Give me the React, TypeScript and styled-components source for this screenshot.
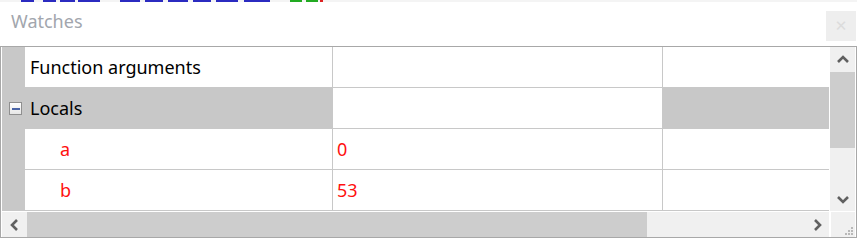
import styled, { createGlobalStyle } from "styled-components";

const GlobalStyle = createGlobalStyle`
  html, body {
    margin: 0;
    padding: 0;
    background: #ffffff;
  }
  body {
    font-family: "Noto Sans", "Open Sans", sans-serif;
  }
`;

const Page = styled.div`
  width: 857px;
  height: 239px;
  background: #ffffff;
  overflow: hidden;
`;

const CodeStrip = styled.div`
  position: relative;
  height: 2px;
  background: #f4f4f4;
`;

const CodeBit = styled.span<{ $color: string }>`
  position: absolute;
  top: 0;
  height: 2px;
  background: ${(p) => p.$color};
`;

const Header = styled.div`
  display: flex;
  align-items: flex-start;
  justify-content: space-between;
  height: 44px;
`;

const Title = styled.div`
  margin: 7px 0 0 11px;
  font-size: 18px;
  color: #a2a6ad;
`;

const CloseButton = styled.div`
  display: flex;
  align-items: center;
  justify-content: center;
  width: 30px;
  height: 30px;
  margin-top: 9px;
  margin-right: 1px;
  background: #eeeeee;
  color: #dcdcdc;
  font-family: "DejaVu Sans", sans-serif;
  font-weight: bold;
  font-size: 15px;
`;

const Panel = styled.div`
  display: grid;
  grid-template-columns: 1fr 26px;
  grid-template-rows: 164px 26px;
  padding: 0 1px 0 1px;
  border: 1px solid #a8a8a8;
  box-sizing: content-box;
  width: 853px;
`;

const Grid = styled.div`
  display: grid;
  grid-template-columns: 23px 308px 330px 1fr;
  grid-auto-rows: 41px;
`;

const Gutter = styled.div`
  display: flex;
  align-items: center;
  justify-content: center;
  background: #c8c8c8;
`;

const Cell = styled.div<{ $shaded?: boolean; $indent?: number; $red?: boolean; $last?: boolean }>`
  display: flex;
  align-items: center;
  padding-left: ${(p) => p.$indent ?? 5}px;
  background: ${(p) => (p.$shaded ? "#c8c8c8" : "#ffffff")};
  border-bottom: 1px solid #c8c8c8;
  border-right: ${(p) => (p.$last ? "none" : "1px solid #c8c8c8")};
  color: ${(p) => (p.$red ? "#ff1010" : "#000000")};
  font-size: 18px;
  white-space: nowrap;
`;

const ExpandBox = styled.div`
  display: flex;
  align-items: center;
  justify-content: center;
  width: 11px;
  height: 11px;
  margin-left: 4px;
  border: 1px solid #8f8f8f;
  background: linear-gradient(#ffffff, #e6e6e6);
`;

const Dash = styled.div`
  width: 8px;
  height: 2px;
  background: #4a64a6;
`;

const VScroll = styled.div`
  display: flex;
  flex-direction: column;
  background: #f0f0f0;
  margin-left: 1px;
`;

const ArrowBox = styled.div`
  display: flex;
  align-items: center;
  justify-content: center;
  width: 25px;
  height: 25px;
  flex-shrink: 0;
`;

const VThumb = styled.div`
  height: 76px;
  background: #cdcdcd;
`;

const Track = styled.div`
  flex: 1;
`;

const HScroll = styled.div`
  display: flex;
  background: #f0f0f0;
  margin-top: 1px;
`;

const HThumb = styled.div`
  width: 620px;
  background: #cdcdcd;
`;

const Corner = styled.div`
  position: relative;
  margin: 1px 0 0 2px;
  background: #f0f0f0;
`;

const GripDot = styled.span`
  position: absolute;
  width: 2px;
  height: 2px;
  background: #b8b8b8;
`;

function Chevron({ dir }: { dir: "up" | "down" | "left" | "right" }) {
  const pts = {
    up: "1,8 6,3 11,8",
    down: "1,4 6,9 11,4",
    left: "8,1 3,6 8,11",
    right: "4,1 9,6 4,11",
  }[dir];
  return (
    <svg width="12" height="12" viewBox="0 0 12 12">
      <polyline points={pts} fill="none" stroke="#606060" strokeWidth="2.6" />
    </svg>
  );
}

const codeBits = [
  { left: 21, width: 13, color: "#2b2bc0" },
  { left: 43, width: 13, color: "#2b2bc0" },
  { left: 60, width: 15, color: "#2b2bc0" },
  { left: 78, width: 22, color: "#2b2bc0" },
  { left: 120, width: 20, color: "#2b2bc0" },
  { left: 145, width: 18, color: "#2b2bc0" },
  { left: 168, width: 20, color: "#2b2bc0" },
  { left: 193, width: 18, color: "#2b2bc0" },
  { left: 216, width: 22, color: "#2b2bc0" },
  { left: 244, width: 26, color: "#2b2bc0" },
  { left: 290, width: 12, color: "#22aa22" },
  { left: 306, width: 12, color: "#22aa22" },
  { left: 320, width: 3, color: "#dd2222" },
];

const grip = [
  { r: 0, c: 2 },
  { r: 1, c: 1 },
  { r: 1, c: 2 },
  { r: 2, c: 0 },
  { r: 2, c: 1 },
  { r: 2, c: 2 },
];

type Row = { name: string; value: string; kind: "group" | "expanded" | "local" };

const rows: Row[] = [
  { name: "Function arguments", value: "", kind: "group" },
  { name: "Locals", value: "", kind: "expanded" },
  { name: "a", value: "0", kind: "local" },
  { name: "b", value: "53", kind: "local" },
];

export default function App() {
  return (
    <Page>
      <GlobalStyle />
      <CodeStrip>
        {codeBits.map((b, i) => (
          <CodeBit key={i} $color={b.color} style={{ left: b.left, width: b.width }} />
        ))}
      </CodeStrip>
      <Header>
        <Title>Watches</Title>
        <CloseButton>✕</CloseButton>
      </Header>
      <Panel>
        <Grid>
          {rows.map((row) => {
            const shaded = row.kind === "expanded";
            const red = row.kind === "local";
            return [
              <Gutter key={row.name + "g"}>
                {row.kind === "expanded" && (
                  <ExpandBox>
                    <Dash />
                  </ExpandBox>
                )}
              </Gutter>,
              <Cell key={row.name + "n"} $shaded={shaded} $red={red} $indent={red ? 35 : 5}>
                {row.name}
              </Cell>,
              <Cell key={row.name + "v"} $red={red} $indent={4}>
                {row.value}
              </Cell>,
              <Cell key={row.name + "t"} $shaded={shaded} $last />,
            ];
          })}
        </Grid>
        <VScroll>
          <ArrowBox>
            <Chevron dir="up" />
          </ArrowBox>
          <VThumb />
          <Track />
          <ArrowBox>
            <Chevron dir="down" />
          </ArrowBox>
        </VScroll>
        <HScroll>
          <ArrowBox>
            <Chevron dir="left" />
          </ArrowBox>
          <HThumb />
          <Track />
          <ArrowBox>
            <Chevron dir="right" />
          </ArrowBox>
        </HScroll>
        <Corner>
          {grip.map((d, i) => (
            <GripDot key={i} style={{ right: 2 + (2 - d.c) * 3, bottom: 2 + (2 - d.r) * 3 }} />
          ))}
        </Corner>
      </Panel>
    </Page>
  );
}
